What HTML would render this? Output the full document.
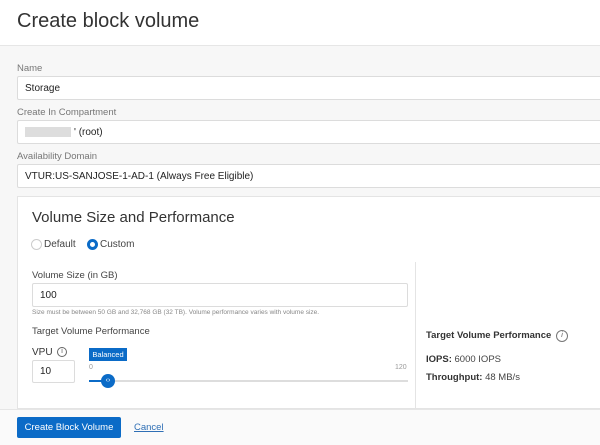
<!DOCTYPE html><html><head><style>
body{margin:0;width:600px;height:444px;overflow:hidden;background:#f7f7f7;font-family:"Liberation Sans",sans-serif;color:#222;position:relative}
.a{position:absolute}
.hdr{left:0;top:0;width:600px;height:45px;background:#fff;border-bottom:1px solid #e6e6e6}
.lbl{font-size:9.5px;color:#777}
.in{background:#fff;border:1px solid #dcdcdc;border-radius:2px;box-sizing:border-box;font-size:10px;color:#222;padding-left:7px;display:flex;align-items:center}
</style></head><body>
<div class="a hdr"></div>
<div class="a" style="left:17px;top:10px;font-size:20px;color:#333">Create block volume</div>
<div class="a lbl" style="left:17px;top:63px">Name</div>
<div class="a in" style="left:17px;top:76px;width:590px;height:24px">Storage</div>
<div class="a lbl" style="left:17px;top:107px">Create In Compartment</div>
<div class="a in" style="left:17px;top:120px;width:590px;height:24px"><span style="display:inline-block;width:46px;height:10px;background:#ddd;margin-right:3px"></span>' (root)</div>
<div class="a lbl" style="left:17px;top:151px">Availability Domain</div>
<div class="a in" style="left:17px;top:164px;width:590px;height:24px">VTUR:US-SANJOSE-1-AD-1 (Always Free Eligible)</div>
<div class="a" style="left:17px;top:196px;width:590px;height:213px;background:#fff;border:1px solid #e4e4e4;box-sizing:border-box"></div>
<div class="a" style="left:32px;top:209px;font-size:15px;color:#333">Volume Size and Performance</div>
<div class="a" style="left:31px;top:239px;width:9px;height:9px;border:1px solid #ccc;border-radius:50%"></div>
<div class="a" style="left:44px;top:239px;font-size:10px;color:#444">Default</div>
<div class="a" style="left:87px;top:239px;width:5px;height:5px;border:3px solid #0b6bc7;border-radius:50%;background:#fff"></div>
<div class="a" style="left:100px;top:239px;font-size:10px;color:#444">Custom</div>
<div class="a" style="left:415px;top:262px;width:1px;height:147px;background:#e4e4e4"></div>
<div class="a" style="left:32px;top:270px;font-size:9.5px;color:#444">Volume Size (in GB)</div>
<div class="a in" style="left:32px;top:283px;width:376px;height:24px">100</div>
<div class="a" style="left:32px;top:309px;font-size:6.5px;color:#888">Size must be between 50 GB and 32,768 GB (32 TB). Volume performance varies with volume size.</div>
<div class="a" style="left:32px;top:326px;font-size:9.5px;color:#444">Target Volume Performance</div>
<div class="a" style="left:32px;top:347px;font-size:10px;color:#333">VPU</div>
<div class="a" style="left:57px;top:347px;width:8px;height:8px;border:1px solid #666;border-radius:50%;font-size:7px;line-height:8px;text-align:center;color:#555">i</div>
<div class="a in" style="left:32px;top:360px;width:43px;height:23px">10</div>
<div class="a" style="left:89px;top:348px;width:38px;height:13px;background:#0b6bc7;color:#fff;font-size:7.5px;line-height:13px;text-align:center">Balanced</div>
<div class="a" style="left:89px;top:364px;font-size:7px;color:#999">0</div>
<div class="a" style="left:395px;top:364px;font-size:7px;color:#999">120</div>
<div class="a" style="left:89px;top:380px;width:319px;height:2px;background:#ddd"></div>
<div class="a" style="left:89px;top:380px;width:19px;height:2px;background:#0b6bc7"></div>
<div class="a" style="left:101px;top:374px;width:14px;height:14px;border-radius:50%;background:#0b6bc7;color:#fff;font-size:7px;line-height:14px;text-align:center">‹›</div>
<div class="a" style="left:426px;top:330px;font-size:9.5px;font-weight:bold;color:#333">Target Volume Performance</div>
<div class="a" style="left:556px;top:330px;width:10px;height:10px;border:1px solid #777;border-radius:50%;font-size:7px;line-height:10px;text-align:center;color:#555;font-style:italic">i</div>
<div class="a" style="left:426px;top:354px;font-size:9.5px;color:#444"><b style="color:#333">IOPS:</b> 6000 IOPS</div>
<div class="a" style="left:426px;top:372px;font-size:9.5px;color:#444"><b style="color:#333">Throughput:</b> 48 MB/s</div>
<div class="a" style="left:0;top:409px;width:600px;height:35px;background:#fafafa;border-top:1px solid #e6e6e6"></div>
<div class="a" style="left:17px;top:417px;width:104px;height:21px;background:#0b6bc7;border-radius:2px;color:#fff;font-size:9.5px;line-height:21px;text-align:center">Create Block Volume</div>
<div class="a" style="left:134px;top:422px;font-size:9.5px;color:#2f6fb5;text-decoration:underline">Cancel</div>
</body></html>
